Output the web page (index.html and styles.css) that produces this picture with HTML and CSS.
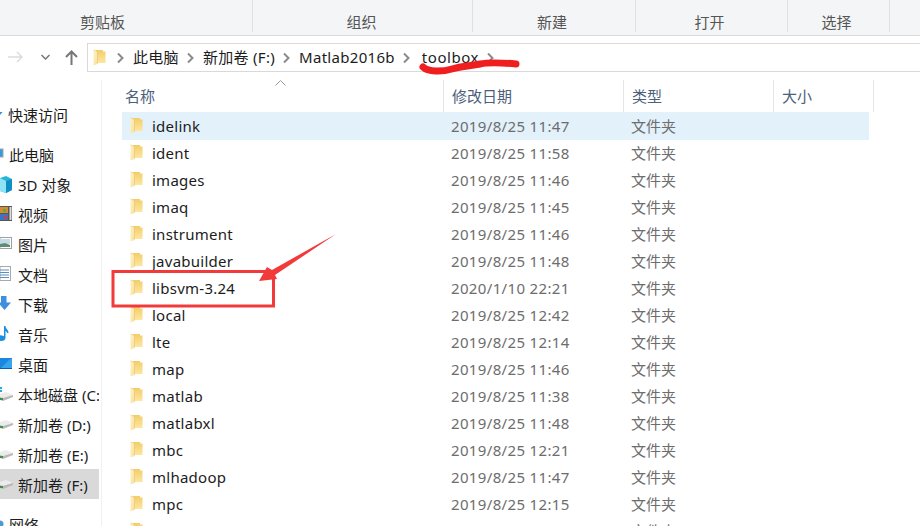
FILE: index.html
```html
<!DOCTYPE html>
<html lang="zh-CN">
<head>
<meta charset="utf-8">
<title>toolbox</title>
<link rel="stylesheet" href="styles.css">
</head>
<body>
<svg class="defs" width="0" height="0" aria-hidden="true">
  <defs>
    <linearGradient id="fb" x1="0" y1="0" x2="0" y2="1"><stop offset="0" stop-color="#f3cd68"/><stop offset="1" stop-color="#fde6a0"/></linearGradient>
    <linearGradient id="ff" x1="0" y1="0" x2="1" y2="1"><stop offset="0" stop-color="#fef2c6"/><stop offset="1" stop-color="#f9e09a"/></linearGradient>
    <symbol id="folder" viewBox="0 0 13 17">
      <path d="M3 1h7v1.500h2.500V14H3z" fill="url(#fb)"/>
      <path d="M.5 1 4.500 2.500V15L.5 16.500z" fill="url(#ff)"/>
      <path d="M.5 1 4.500 2.500 4.500 14.500" fill="none" stroke="#e6c26a" stroke-width=".6"/>
    </symbol>
    <symbol id="drive" viewBox="0 0 14 12">
      <path d="M0 4 6 2 13 5 3 8 0 7z" fill="#ececec"/>
      <path d="M0 7 3 8 13 5 13 7 3 11 0 10z" fill="#b8b8b8"/>
      <rect x="0" y="8" width="3" height="2" fill="#3f8f4f"/>
    </symbol>
    <symbol id="chev" viewBox="0 0 13 10">
      <path d="M4 .5 8.500 5 4 9.500" fill="none" stroke="#8a8a8a" stroke-width="2"/>
    </symbol>
  </defs>
</svg>

<header class="ribbon">
  <div class="group group-clip">剪贴板</div>
  <div class="group group-org">组织</div>
  <div class="group group-new">新建</div>
  <div class="group group-open">打开</div>
  <div class="group group-sel">选择</div>
</header>

<nav class="navbar">
  <div class="nav-buttons">
    <svg class="nav-forward" width="16" height="12" viewBox="0 0 16 12"><path d="M0 6h14M9 1l5 5-5 5" fill="none" stroke="#dcdcdc" stroke-width="1.500"/></svg>
    <svg class="nav-down" width="9" height="6" viewBox="0 0 9 6"><path d="M.5 1 4.500 5 8.500 1" fill="none" stroke="#777" stroke-width="1.500"/></svg>
    <svg class="nav-up" width="13" height="15" viewBox="0 0 13 15"><path d="M6.500 15V1.500M1 7l5.500-5.500L12 7" fill="none" stroke="#777" stroke-width="2"/></svg>
  </div>
  <div class="address">
    <svg class="addr-folder" width="13" height="17"><use href="#folder"/></svg>
    <svg class="sep" width="13" height="10"><use href="#chev"/></svg><span class="crumb">此电脑</span>
    <svg class="sep" width="13" height="10"><use href="#chev"/></svg><span class="crumb">新加卷 (F:)</span>
    <svg class="sep" width="13" height="10"><use href="#chev"/></svg><span class="crumb">Matlab2016b</span>
    <svg class="sep" width="13" height="10"><use href="#chev"/></svg><span class="crumb crumb-last">toolbox</span>
    <svg class="sep" width="13" height="10"><use href="#chev"/></svg>
  </div>
</nav>

<div class="body-row">
  <aside class="sidebar">
    <div class="side-item top">
      <svg class="side-icon tiny" width="3" height="10" viewBox="0 0 3 10"><path d="M0 3h2.500L0 6z" fill="#2f8fd8"/></svg>快速访问
    </div>
    <div class="side-item top gap">
      <svg class="side-icon tiny-pc" width="4" height="12" viewBox="0 0 4 12"><rect x="-5" y="1" width="8" height="8" fill="#3a9ad9" stroke="#9aa6b0"/></svg>此电脑
    </div>
    <div class="side-item">
      <svg class="side-icon" width="14" height="17" viewBox="0 0 14 17"><path d="M0 2 6 0l6 3v11l-6 3-6-2z" fill="#27b6d8"/><path d="M0 2l6 3v12l-6-2z" fill="#8fe3f2"/><path d="M6 5l6-2v11l-6 3z" fill="#0f8fc4"/></svg>3D 对象
    </div>
    <div class="side-item">
      <svg class="side-icon" width="14" height="16" viewBox="0 0 14 16"><rect width="12" height="15" fill="#555"/><rect y="1" width="8" height="6" fill="#d98a2b"/><rect y="8" width="8" height="6" fill="#3b74c4"/><rect x="3" y="3" width="3" height="3" fill="#5da846"/><rect x="4" y="10" width="3" height="3" fill="#c9453a"/><rect x="9.500" y="1" width="2" height="13" fill="#ddd"/></svg>视频
    </div>
    <div class="side-item">
      <svg class="side-icon" width="14" height="14" viewBox="0 0 14 14"><rect y=".5" width="11.500" height="11" fill="#fff" stroke="#a0a0a0"/><rect y="2" width="10" height="5" fill="#c5dce8"/><path d="M0 7l5-1 5 2v2H0z" fill="#5f8d74"/></svg>图片
    </div>
    <div class="side-item">
      <svg class="side-icon" width="14" height="16" viewBox="0 0 14 16"><rect y=".5" width="10.500" height="14" fill="#fff" stroke="#a8a8a8"/><path d="M0 4h9M0 6.500h9M0 9h9M0 11.500h9" stroke="#5c8fc0"/></svg>文档
    </div>
    <div class="side-item">
      <svg class="side-icon" width="14" height="16" viewBox="0 0 14 16"><path d="M1 0h5.500v6.500H11L4.500 14-2 6.500h3z" fill="#3d8fe0"/></svg>下载
    </div>
    <div class="side-item">
      <svg class="side-icon" width="14" height="16" viewBox="0 0 14 16"><path d="M4 0h1.500c0 3 3 3.500 3 7H7C7 6 6 5 5.500 5v7c0 2-2 3-4 3S-2 14 -2 12s2-3 3.500-2.500L4 10z" fill="#1b8fe0"/></svg>音乐
    </div>
    <div class="side-item">
      <svg class="side-icon" width="14" height="12" viewBox="0 0 14 12"><rect width="12" height="11" fill="#1a86dc"/><path d="M0 11 10 1h2v10z" fill="#35a6ee"/><rect y="10" width="12" height="1" fill="#0d5ea8"/></svg>桌面
    </div>
    <div class="side-item">
      <svg class="side-icon" width="14" height="15" viewBox="0 0 14 15"><g transform="translate(0 3)"><use href="#drive" width="14" height="12"/></g><rect width="2" height="2" fill="#23a9ee"/><rect y="3" width="2" height="2" fill="#23a9ee"/></svg>本地磁盘 (C:)
    </div>
    <div class="side-item"><svg class="side-icon" width="14" height="12"><use href="#drive"/></svg>新加卷 (D:)</div>
    <div class="side-item"><svg class="side-icon" width="14" height="12"><use href="#drive"/></svg>新加卷 (E:)</div>
    <div class="side-item active"><svg class="side-icon" width="14" height="12"><use href="#drive"/></svg>新加卷 (F:)</div>
    <div class="side-item top gap">
      <svg class="side-icon tiny-pc" width="4" height="12" viewBox="0 0 4 12"><circle cx="0" cy="6" r="3.500" fill="#4a9bd0"/></svg>网络
    </div>
  </aside>

  <main class="files">
    <div class="head">
      <div class="hcell hname">名称</div>
      <div class="hcell">修改日期</div>
      <div class="hcell">类型</div>
      <div class="hcell">大小</div>
      <svg class="sort" width="11" height="6" viewBox="0 0 11 6"><path d="M.5 5.500 5.500 .5l5 5" fill="none" stroke="#9a9a9a"/></svg>
    </div>
    <div class="row first selected"><div class="name"><svg width="13" height="17"><use href="#folder"/></svg>idelink</div><div class="date">2019/8/25 11:47</div><div class="type">文件夹</div></div>
    <div class="row"><div class="name"><svg width="13" height="17"><use href="#folder"/></svg>ident</div><div class="date">2019/8/25 11:58</div><div class="type">文件夹</div></div>
    <div class="row"><div class="name"><svg width="13" height="17"><use href="#folder"/></svg>images</div><div class="date">2019/8/25 11:46</div><div class="type">文件夹</div></div>
    <div class="row"><div class="name"><svg width="13" height="17"><use href="#folder"/></svg>imaq</div><div class="date">2019/8/25 11:45</div><div class="type">文件夹</div></div>
    <div class="row"><div class="name"><svg width="13" height="17"><use href="#folder"/></svg>instrument</div><div class="date">2019/8/25 11:46</div><div class="type">文件夹</div></div>
    <div class="row"><div class="name"><svg width="13" height="17"><use href="#folder"/></svg>javabuilder</div><div class="date">2019/8/25 11:48</div><div class="type">文件夹</div></div>
    <div class="row"><div class="name"><svg width="13" height="17"><use href="#folder"/></svg>libsvm-3.24</div><div class="date">2020/1/10 22:21</div><div class="type">文件夹</div></div>
    <div class="row"><div class="name"><svg width="13" height="17"><use href="#folder"/></svg>local</div><div class="date">2019/8/25 12:42</div><div class="type">文件夹</div></div>
    <div class="row"><div class="name"><svg width="13" height="17"><use href="#folder"/></svg>lte</div><div class="date">2019/8/25 12:14</div><div class="type">文件夹</div></div>
    <div class="row"><div class="name"><svg width="13" height="17"><use href="#folder"/></svg>map</div><div class="date">2019/8/25 11:46</div><div class="type">文件夹</div></div>
    <div class="row"><div class="name"><svg width="13" height="17"><use href="#folder"/></svg>matlab</div><div class="date">2019/8/25 11:38</div><div class="type">文件夹</div></div>
    <div class="row"><div class="name"><svg width="13" height="17"><use href="#folder"/></svg>matlabxl</div><div class="date">2019/8/25 11:48</div><div class="type">文件夹</div></div>
    <div class="row"><div class="name"><svg width="13" height="17"><use href="#folder"/></svg>mbc</div><div class="date">2019/8/25 12:21</div><div class="type">文件夹</div></div>
    <div class="row"><div class="name"><svg width="13" height="17"><use href="#folder"/></svg>mlhadoop</div><div class="date">2019/8/25 11:47</div><div class="type">文件夹</div></div>
    <div class="row"><div class="name"><svg width="13" height="17"><use href="#folder"/></svg>mpc</div><div class="date">2019/8/25 12:15</div><div class="type">文件夹</div></div>
    <div class="row"><div class="name"><svg width="13" height="17"><use href="#folder"/></svg></div><div class="date"></div><div class="type">文件夹</div></div>
  </main>
</div>

<svg class="markup" width="920" height="526" viewBox="0 0 920 526" aria-hidden="true">
  <path d="M423 67C428 72 442 72 452 69 462 66 470 66 480 64 490 62 505 63 516 64" fill="none" stroke="#f01f1f" stroke-width="7" stroke-linecap="round"/>
  <rect x="113" y="271.500" width="160.500" height="34.500" fill="none" stroke="#f33a3a" stroke-width="3"/>
  <path d="M259 281 267 267 272 270 336 234 275 275 277 279z" fill="#f33a3a"/>
</svg>
</body>
</html>
```

FILE: styles.css
```css
* { box-sizing: border-box; }

html, body {
  margin: 0;
  height: 526px;
  overflow: hidden;
  background: #fff;
}

body {
  width: 920px;
  position: relative;
  font-family: "Noto Sans", "Noto Sans CJK SC", sans-serif;
  font-size: 15px;
}

.defs { position: absolute; }

.ribbon {
  display: flex;
  height: 36px;
  background: #f4f5f7;
  border-bottom: 1px solid #dadbdc;
  color: #555;
}

.group {
  height: 32px;
  padding-top: 12px;
  line-height: 20px;
  text-align: center;
  border-right: 1px solid #dfe0e2;
}

.group-clip { width: 253px; padding-right: 47px; }
.group-org { width: 220px; padding-right: 2px; }
.group-new { width: 163px; padding-right: 4px; }
.group-open { width: 152px; padding-right: 4px; }
.group-sel { width: 102px; padding-right: 4px; }

.navbar {
  display: flex;
  height: 36px;
  padding-top: 7px;
}

.nav-buttons {
  width: 87px;
  height: 28px;
  display: flex;
  align-items: center;
  padding-left: 8px;
}

.nav-down { margin-left: 17px; }
.nav-up { margin-left: 15px; }

.address {
  flex: 1;
  height: 29px;
  display: flex;
  align-items: center;
  padding-left: 5px;
  border: 1px solid #d9d9d9;
  border-right: 0;
  color: #1c1c1c;
}

.addr-folder { margin-right: 8px; }

.sep {
  flex: none;
  margin-right: 6px;
}

.crumb {
  margin-right: 5px;
  letter-spacing: .3px;
  position: relative;
  top: -1px;
}

.crumb-last {
  margin-left: 3px;
  letter-spacing: .55px;
}

.body-row { display: flex; }

.sidebar {
  width: 102px;
  height: 454px;
  margin-top: 8px;
  padding-top: 19px;
  padding-right: 2px;
  border-right: 1px solid #f1f1f1;
  overflow: hidden;
  color: #1c1c1c;
}

.side-item {
  display: flex;
  align-items: center;
  height: 30px;
  white-space: nowrap;
  overflow: hidden;
}

.side-icon {
  flex: none;
  margin-right: 4px;
}

.side-item.top .side-icon { margin-right: 5px; }
.side-item.gap { margin-top: 10px; }
.side-item.active { background: #d9d9d9; }

.files {
  flex: 1;
  padding-top: 8px;
  padding-left: 20px;
}

.head {
  display: grid;
  grid-template-columns: 322px 180px 150px 100px;
  height: 32px;
  position: relative;
  color: #4c607a;
}

.hcell {
  line-height: 32px;
  padding-left: 8px;
  border-right: 1px solid #e5e5e5;
}

.hname { padding-left: 3px; }

.sort {
  position: absolute;
  left: 153px;
  top: 0;
}

.row {
  display: grid;
  grid-template-columns: 329px 180px 1fr;
  align-items: center;
  width: 747px;
  height: 27px;
  padding-bottom: 2px;
}

.row.first {
  height: 28px;
  padding-bottom: 1px;
}

.row.selected { background: #e3f1fb; }

.name {
  display: flex;
  align-items: center;
  gap: 9px;
  padding-left: 8px;
  color: #1c1c1c;
  letter-spacing: .25px;
}

.date {
  color: #6d6d6d;
  letter-spacing: .35px;
}

.type { color: #6d6d6d; }

.markup {
  position: absolute;
  left: 0;
  top: 0;
  pointer-events: none;
}
```
